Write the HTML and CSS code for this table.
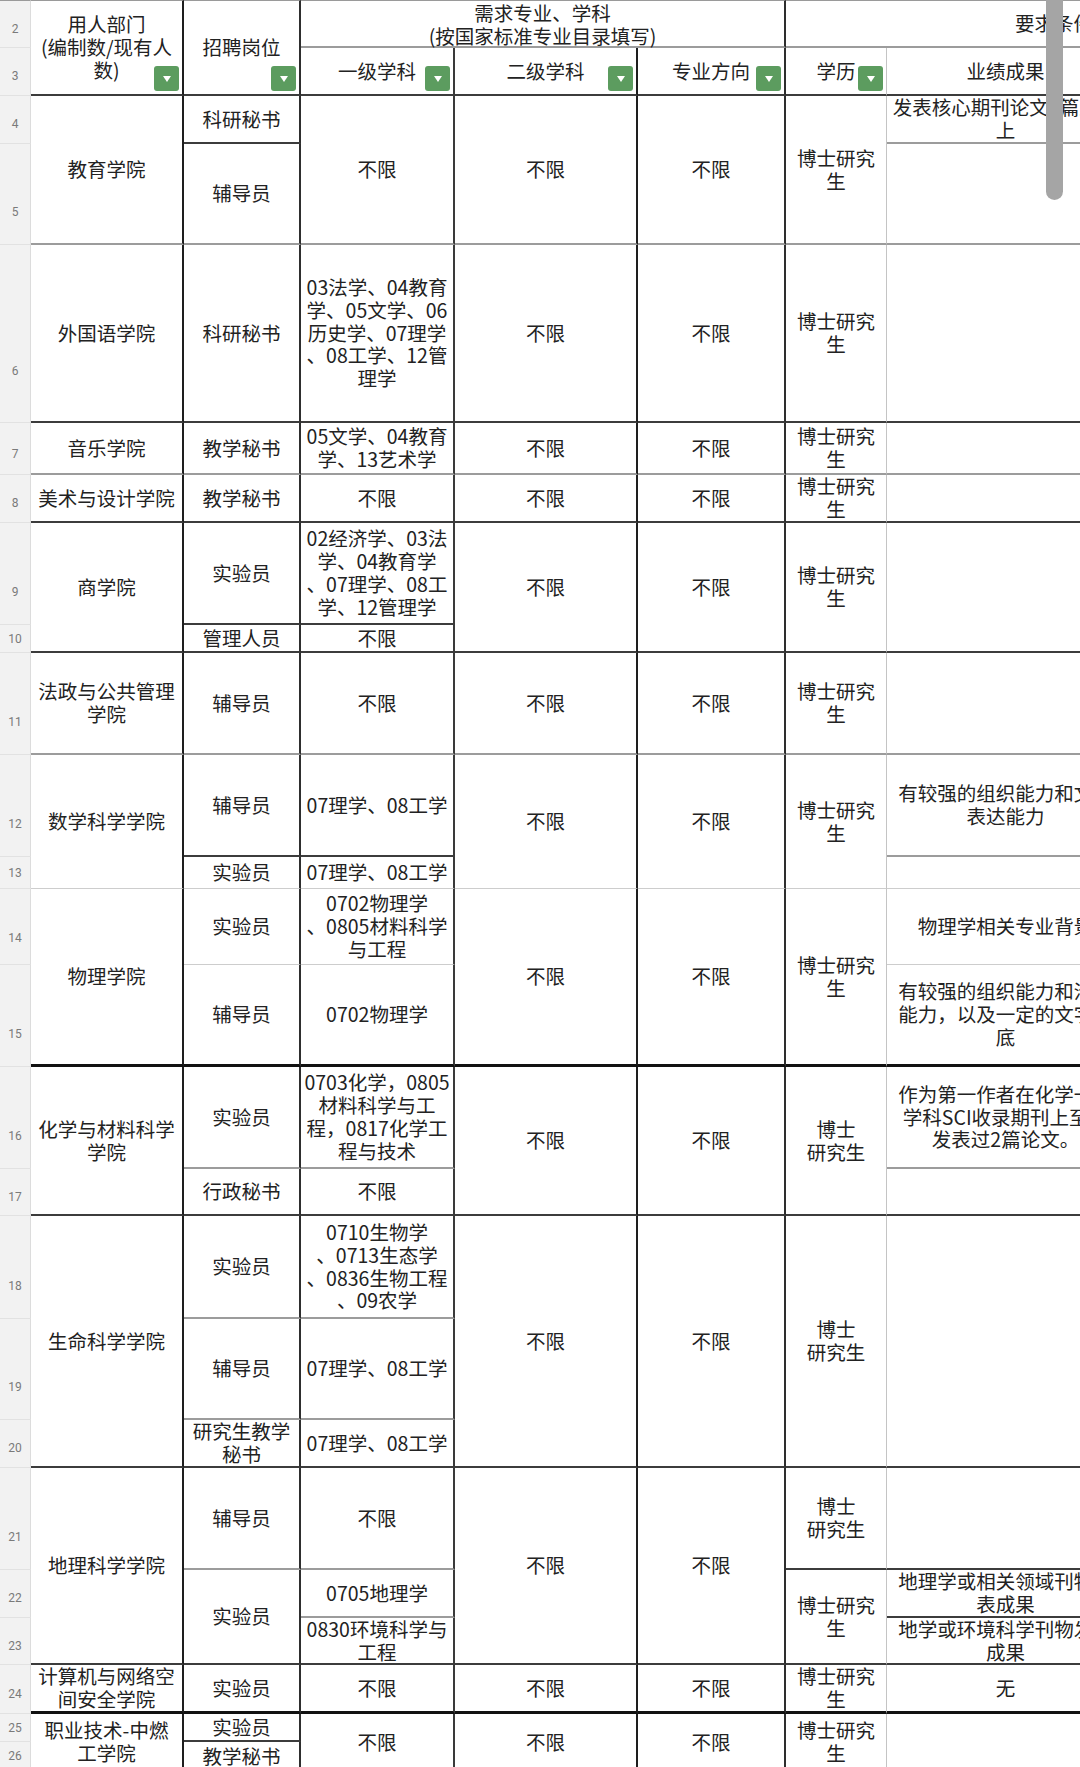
FILE: index.html
```html
<!DOCTYPE html>
<html lang="zh-CN">
<head>
<meta charset="utf-8">
<title>招聘岗位表</title>
<link rel="stylesheet" href="styles.css">
</head>
<body>
<div class="sheet">
  <!-- row 2 -->
  <div class="rh top">2</div>
  <div class="c cA s2 bd top">用人部门<br>(编制数/现有人<br>数)<span class="dd"><svg width="8" height="6" viewBox="0 0 8 6"><path d="M0 0H8L4 6Z" fill="#fff"/></svg></span></div>
  <div class="c cB s2 bd top">招聘岗位<span class="dd"><svg width="8" height="6" viewBox="0 0 8 6"><path d="M0 0H8L4 6Z" fill="#fff"/></svg></span></div>
  <div class="c cCE bm top hdr2">需求专业、学科<br>(按国家标准专业目录填写)</div>
  <div class="c cFH bm top">要求条件</div>
  <!-- row 3 -->
  <div class="rh">3</div>
  <div class="c cC bd">一级学科<span class="dd"><svg width="8" height="6" viewBox="0 0 8 6"><path d="M0 0H8L4 6Z" fill="#fff"/></svg></span></div>
  <div class="c cD bd">二级学科<span class="dd"><svg width="8" height="6" viewBox="0 0 8 6"><path d="M0 0H8L4 6Z" fill="#fff"/></svg></span></div>
  <div class="c cE bd">专业方向<span class="dd"><svg width="8" height="6" viewBox="0 0 8 6"><path d="M0 0H8L4 6Z" fill="#fff"/></svg></span></div>
  <div class="c cF bd">学历<span class="dd"><svg width="8" height="6" viewBox="0 0 8 6"><path d="M0 0H8L4 6Z" fill="#fff"/></svg></span></div>
  <div class="c cG bd">业绩成果</div>
  <div class="c cH bd"></div>
  <!-- row 4 -->
  <div class="rh">4</div>
  <div class="c cA s2 bm">教育学院</div>
  <div class="c cB bd">科研秘书</div>
  <div class="c cC s2 bm">不限</div>
  <div class="c cD s2 bm">不限</div>
  <div class="c cE s2 bm">不限</div>
  <div class="c cF s2 bm">博士研究<br>生</div>
  <div class="c cG bm">发表核心期刊论文1篇及以<br>上</div>
  <div class="c cH bm"></div>
  <!-- row 5 -->
  <div class="rh">5</div>
  <div class="c cB bm">辅导员</div>
  <div class="c cG bm"></div>
  <div class="c cH bm"></div>
  <!-- row 6 -->
  <div class="rh">6</div>
  <div class="c cA bd">外国语学院</div>
  <div class="c cB bd">科研秘书</div>
  <div class="c cC bd">03法学、04教育<br>学、05文学、06<br>历史学、07理学<br>、08工学、12管<br>理学</div>
  <div class="c cD bd">不限</div>
  <div class="c cE bd">不限</div>
  <div class="c cF bd">博士研究<br>生</div>
  <div class="c cG bd"></div>
  <div class="c cH bd"></div>
  <!-- row 7 -->
  <div class="rh">7</div>
  <div class="c cA bm">音乐学院</div>
  <div class="c cB bm">教学秘书</div>
  <div class="c cC bm">05文学、04教育<br>学、13艺术学</div>
  <div class="c cD bm">不限</div>
  <div class="c cE bm">不限</div>
  <div class="c cF bm">博士研究<br>生</div>
  <div class="c cG bm"></div>
  <div class="c cH bm"></div>
  <!-- row 8 -->
  <div class="rh">8</div>
  <div class="c cA bd">美术与设计学院</div>
  <div class="c cB bd">教学秘书</div>
  <div class="c cC bd">不限</div>
  <div class="c cD bd">不限</div>
  <div class="c cE bd">不限</div>
  <div class="c cF bd">博士研究<br>生</div>
  <div class="c cG bd"></div>
  <div class="c cH bd"></div>
  <!-- row 9 -->
  <div class="rh">9</div>
  <div class="c cA s2 bd">商学院</div>
  <div class="c cB bd">实验员</div>
  <div class="c cC bd">02经济学、03法<br>学、04教育学<br>、07理学、08工<br>学、12管理学</div>
  <div class="c cD s2 bd">不限</div>
  <div class="c cE s2 bd">不限</div>
  <div class="c cF s2 bd">博士研究<br>生</div>
  <div class="c cG s2 bd"></div>
  <div class="c cH s2 bd"></div>
  <!-- row 10 -->
  <div class="rh">10</div>
  <div class="c cB bd">管理人员</div>
  <div class="c cC bd">不限</div>
  <!-- row 11 -->
  <div class="rh">11</div>
  <div class="c cA bm">法政与公共管理<br>学院</div>
  <div class="c cB bm">辅导员</div>
  <div class="c cC bm">不限</div>
  <div class="c cD bm">不限</div>
  <div class="c cE bm">不限</div>
  <div class="c cF bm">博士研究<br>生</div>
  <div class="c cG bm"></div>
  <div class="c cH bm"></div>
  <!-- row 12 -->
  <div class="rh">12</div>
  <div class="c cA s2 bl">数学科学学院</div>
  <div class="c cB bd">辅导员</div>
  <div class="c cC bd">07理学、08工学</div>
  <div class="c cD s2 bl">不限</div>
  <div class="c cE s2 bl">不限</div>
  <div class="c cF s2 bl">博士研究<br>生</div>
  <div class="c cG bm">有较强的组织能力和文字<br>表达能力</div>
  <div class="c cH bm"></div>
  <!-- row 13 -->
  <div class="rh">13</div>
  <div class="c cB bl">实验员</div>
  <div class="c cC bl">07理学、08工学</div>
  <div class="c cG bl"></div>
  <div class="c cH bl"></div>
  <!-- row 14 -->
  <div class="rh">14</div>
  <div class="c cA s2 bt">物理学院</div>
  <div class="c cB bl">实验员</div>
  <div class="c cC bl">0702物理学<br>、0805材料科学<br>与工程</div>
  <div class="c cD s2 bt">不限</div>
  <div class="c cE s2 bt">不限</div>
  <div class="c cF s2 bt">博士研究<br>生</div>
  <div class="c cG bl">物理学相关专业背景</div>
  <div class="c cH bl"></div>
  <!-- row 15 -->
  <div class="rh">15</div>
  <div class="c cB bt">辅导员</div>
  <div class="c cC bt">0702物理学</div>
  <div class="c cG bt">有较强的组织能力和沟通<br>能力，以及一定的文字功<br>底</div>
  <div class="c cH bt"></div>
  <!-- row 16 -->
  <div class="rh">16</div>
  <div class="c cA s2 bd">化学与材料科学<br>学院</div>
  <div class="c cB bm">实验员</div>
  <div class="c cC bm">0703化学，0805<br>材料科学与工<br>程，0817化学工<br>程与技术</div>
  <div class="c cD s2 bd">不限</div>
  <div class="c cE s2 bd">不限</div>
  <div class="c cF s2 bd">博士<br>研究生</div>
  <div class="c cG bm">作为第一作者在化学一级<br>学科SCI收录期刊上至少<br>发表过2篇论文。</div>
  <div class="c cH bm"></div>
  <!-- row 17 -->
  <div class="rh">17</div>
  <div class="c cB bd">行政秘书</div>
  <div class="c cC bd">不限</div>
  <div class="c cG bd"></div>
  <div class="c cH bd"></div>
  <!-- row 18 -->
  <div class="rh">18</div>
  <div class="c cA s3 bd">生命科学学院</div>
  <div class="c cB bm">实验员</div>
  <div class="c cC bm">0710生物学<br>、0713生态学<br>、0836生物工程<br>、09农学</div>
  <div class="c cD s3 bd">不限</div>
  <div class="c cE s3 bd">不限</div>
  <div class="c cF s3 bd">博士<br>研究生</div>
  <div class="c cG s3 bd"></div>
  <div class="c cH s3 bd"></div>
  <!-- row 19 -->
  <div class="rh">19</div>
  <div class="c cB bm">辅导员</div>
  <div class="c cC bm">07理学、08工学</div>
  <!-- row 20 -->
  <div class="rh">20</div>
  <div class="c cB bd">研究生教学<br>秘书</div>
  <div class="c cC bd">07理学、08工学</div>
  <!-- row 21 -->
  <div class="rh">21</div>
  <div class="c cA s3 bd">地理科学学院</div>
  <div class="c cB bm">辅导员</div>
  <div class="c cC bm">不限</div>
  <div class="c cD s3 bd">不限</div>
  <div class="c cE s3 bd">不限</div>
  <div class="c cF bd">博士<br>研究生</div>
  <div class="c cG bd"></div>
  <div class="c cH bd"></div>
  <!-- row 22 -->
  <div class="rh">22</div>
  <div class="c cB s2 bd">实验员</div>
  <div class="c cC bm">0705地理学</div>
  <div class="c cF s2 bd">博士研究<br>生</div>
  <div class="c cG bd">地理学或相关领域刊物发<br>表成果</div>
  <div class="c cH bd"></div>
  <!-- row 23 -->
  <div class="rh">23</div>
  <div class="c cC bd">0830环境科学与<br>工程</div>
  <div class="c cG bd">地学或环境科学刊物发表<br>成果</div>
  <div class="c cH bd"></div>
  <!-- row 24 -->
  <div class="rh">24</div>
  <div class="c cA bt">计算机与网络空<br>间安全学院</div>
  <div class="c cB bt">实验员</div>
  <div class="c cC bt">不限</div>
  <div class="c cD bt">不限</div>
  <div class="c cE bt">不限</div>
  <div class="c cF bt">博士研究<br>生</div>
  <div class="c cG bt">无</div>
  <div class="c cH bt"></div>
  <!-- row 25 -->
  <div class="rh">25</div>
  <div class="c cA s2">职业技术-中燃<br>工学院</div>
  <div class="c cB bd">实验员</div>
  <div class="c cC s2">不限</div>
  <div class="c cD s2">不限</div>
  <div class="c cE s2">不限</div>
  <div class="c cF s2">博士研究<br>生</div>
  <div class="c cG s2"></div>
  <div class="c cH s2"></div>
  <!-- row 26 -->
  <div class="rh">26</div>
  <div class="c cB">教学秘书</div>
</div>
<div class="scroll"></div>
</body>
</html>
```

FILE: styles.css
```css
html, body {
  margin: 0;
  padding: 0;
  overflow: hidden;
  background: #ffffff;
}

body {
  width: 1080px;
  height: 1767px;
  position: relative;
  font-family: "Noto Sans CJK SC", "Noto Sans", sans-serif;
}

.sheet {
  display: grid;
  width: 1322px;
  grid-template-columns: 31px 153px 117px 154px 183px 148px 101px 238px 197px;
  grid-template-rows:
    48px 48px 48px 101px 178px 52px 48px 102px 28px 102px
    102px 32px 76px 102px 102px 47px 103px 101px 48px 102px
    48px 47px 49px 28px 28px;
}

/* row header */
.rh {
  grid-column: 1;
  box-sizing: border-box;
  display: flex;
  flex-direction: column;
  align-items: center;
  background: #f2f2f2;
  color: #7a7a7a;
  font-family: "Roboto", "Noto Sans", sans-serif;
  font-size: 12px;
  line-height: 28px;
  border-right: 1px solid #dcdcdc;
  border-bottom: 1px solid #e2e2e2;
}
.rh::before { content: ""; flex: 3; }
.rh::after { content: ""; flex: 1; }

/* cells */
.c {
  box-sizing: border-box;
  position: relative;
  display: flex;
  align-items: center;
  justify-content: center;
  text-align: center;
  white-space: nowrap;
  font-size: 19.5px;
  line-height: 22.8px;
  color: #222222;
}

.cA { grid-column: 2; border-right: 2px solid #1e1e1e; }
.cB { grid-column: 3; border-right: 2px solid #2e2e2e; }
.cC { grid-column: 4; border-right: 2px solid #3a3a3a; }
.cD { grid-column: 5; border-right: 2px solid #1e1e1e; }
.cE { grid-column: 6; border-right: 2px solid #2e2e2e; }
.cF { grid-column: 7; border-right: 1px solid #c4c4c4; }
.cG { grid-column: 8; border-right: 1px solid #c4c4c4; }
.cH { grid-column: 9; }
.cCE { grid-column: 4 / span 3; border-right: 2px solid #2e2e2e; }
.cFH { grid-column: 7 / span 3; }

.s2 { grid-row: span 2; }
.s3 { grid-row: span 3; }

/* bottom lines */
.bd { border-bottom: 2px solid #3c3c3c; }
.bm { border-bottom: 2px solid #9c9c9c; }
.bl { border-bottom: 1px solid #cdcdcd; }
.bt { border-bottom: 3px solid #111111; }
.top { border-top: 1px solid #9a9a9a; }

.hdr2 { line-height: 23px; }

/* filter dropdown button */
.dd {
  position: absolute;
  right: 3px;
  bottom: 3px;
  width: 25px;
  height: 25px;
  border-radius: 3px;
  background: #5c9c5f;
  display: flex;
  align-items: center;
  justify-content: center;
}

/* overlay scrollbar */
.scroll {
  position: absolute;
  left: 1046px;
  top: -12px;
  width: 17px;
  height: 212px;
  border-radius: 9px;
  background: #a5a5a5;
}
```
